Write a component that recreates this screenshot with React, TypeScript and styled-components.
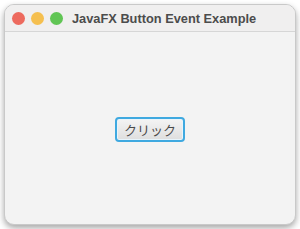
import React from 'react'
import styled, { createGlobalStyle } from 'styled-components'

const Global = createGlobalStyle`
    html, body {
        margin: 0;
        padding: 0;
        background: #ffffff;
    }
    body {
        width: 300px;
        height: 229px;
        overflow: hidden;
        font-family: "Liberation Sans", "Noto Sans CJK JP", sans-serif;
    }
`;

const Window = styled.div`
    margin: 4px 4px 0 4px;
    width: 292px;
    height: 221px;
    box-sizing: border-box;
    border-radius: 10px;
    background: #f3f3f3;
    border: 1px solid #c9c9c9;
    box-shadow: 0 3px 6px rgba(0,0,0,0.35);
    display: flex;
    flex-direction: column;
    overflow: hidden;
`;

const TitleBar = styled.div`
    height: 26px;
    flex: none;
    display: flex;
    align-items: center;
    padding: 0 0 0 7px;
    background: #f0efef;
    border-bottom: 1px solid #d6d6d6;
`;

const Light = styled.span<{ color: string }>`
    width: 13px;
    height: 13px;
    border-radius: 50%;
    background: ${props => props.color};
    margin-right: 6px;
`;

const Title = styled.div`
    margin-left: 3px;
    font-size: 12.8px;
    font-weight: bold;
    color: #4c4c4c;
    font-family: "Liberation Sans", "DejaVu Sans", sans-serif;
`;

const Content = styled.div`
    flex: 1;
    display: flex;
    align-items: center;
    justify-content: center;
    padding-top: 3px;
`;

const Button = styled.button`
    height: 25px;
    padding: 0 7px;
    font-size: 13px;
    font-family: "Noto Sans CJK JP", sans-serif;
    color: #4a4a4a;
    background: linear-gradient(#f4f4f4, #dedede);
    border: 2px solid #3fa9e0;
    border-radius: 4px;
    box-shadow: inset 0 0 0 1px #e8f4fb;
    line-height: 18px;
`;

export default function App() {
    return (
        <>
            <Global />
            <Window>
                <TitleBar>
                    <Light color="#ed6a5e" />
                    <Light color="#f5bf4f" />
                    <Light color="#61c554" />
                    <Title>JavaFX Button Event Example</Title>
                </TitleBar>
                <Content>
                    <Button>クリック</Button>
                </Content>
            </Window>
        </>
    );
}
